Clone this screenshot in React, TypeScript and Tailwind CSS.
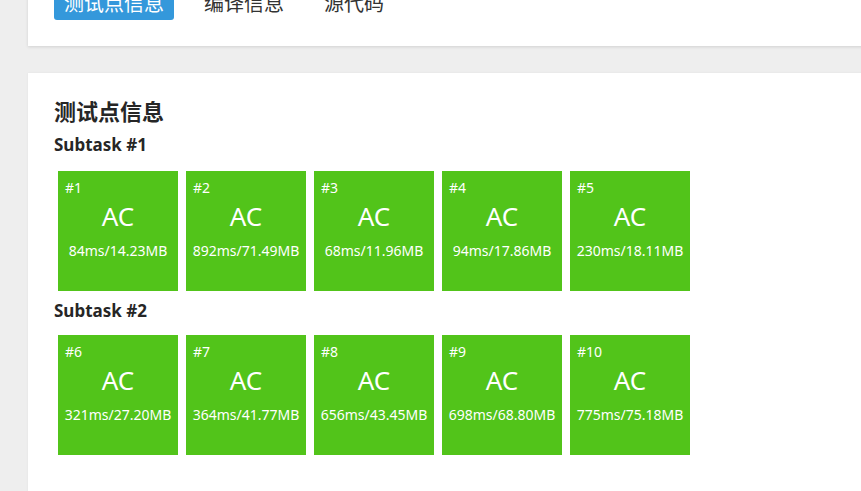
import React from 'react';

interface TestCase {
  id: number;
  status: string;
  time: number;
  memory: string;
}

interface Subtask {
  name: string;
  cases: TestCase[];
}

const subtasks: Subtask[] = [
  {
    name: 'Subtask #1',
    cases: [
      { id: 1, status: 'AC', time: 84, memory: '14.23' },
      { id: 2, status: 'AC', time: 892, memory: '71.49' },
      { id: 3, status: 'AC', time: 68, memory: '11.96' },
      { id: 4, status: 'AC', time: 94, memory: '17.86' },
      { id: 5, status: 'AC', time: 230, memory: '18.11' },
    ],
  },
  {
    name: 'Subtask #2',
    cases: [
      { id: 6, status: 'AC', time: 321, memory: '27.20' },
      { id: 7, status: 'AC', time: 364, memory: '41.77' },
      { id: 8, status: 'AC', time: 656, memory: '43.45' },
      { id: 9, status: 'AC', time: 698, memory: '68.80' },
      { id: 10, status: 'AC', time: 775, memory: '75.18' },
    ],
  },
];

const tabs = ['测试点信息', '编译信息', '源代码'];

function CaseBox({ c }: { c: TestCase }) {
  return (
    <div className="w-[120px] h-[120px] bg-[#52c41a] text-white flex flex-col">
      <div className="text-[14px] leading-[17px] pl-[7px] pt-[8px]">#{c.id}</div>
      <div className="text-[26px] leading-[30px] text-center mt-[5px]">{c.status}</div>
      <div className="text-[14px] leading-[20px] text-center mt-[10px] whitespace-nowrap">
        {c.time}ms/{c.memory}MB
      </div>
    </div>
  );
}

export default function App() {
  const [activeTab, setActiveTab] = React.useState(0);

  return (
    <div
      className="min-h-screen bg-[#eeeeee] overflow-hidden pl-[28px] text-[#262626]"
      style={{ fontFamily: '"Noto Sans", "Noto Sans CJK SC", sans-serif' }}
    >
      {/* tabs card, scrolled so its top is off screen */}
      <div className="bg-white -mt-[46px] pt-[32px] pb-[26px] px-[26px] shadow-[0_1px_3px_rgba(0,0,0,0.12)] w-[900px]">
        <div className="flex gap-[20px]">
          {tabs.map((t, i) => (
            <button
              key={t}
              onClick={() => setActiveTab(i)}
              className={`px-[10px] text-[20px] leading-[34px] rounded-[3px] ${
                activeTab === i ? 'bg-[#3498db] text-white' : 'text-[#333]'
              }`}
              style={{ fontFamily: '"Noto Sans CJK SC", sans-serif' }}
            >
              {t}
            </button>
          ))}
        </div>
      </div>

      <div className="bg-white mt-[27px] pt-[24px] px-[26px] pb-[40px] w-[900px] shadow-[0_0_2px_rgba(0,0,0,0.06)]">
        <h2
          className="text-[22px] leading-[26px] font-bold text-[#262626]"
          style={{ fontFamily: '"Noto Sans CJK SC", sans-serif' }}
        >
          测试点信息
        </h2>
        {subtasks.map((s, idx) => (
          <div key={s.name} className={idx === 0 ? 'mt-[10px]' : 'mt-[8px]'}>
            <h3 className="text-[17px] leading-[24px] font-bold">{s.name}</h3>
            <div className={`flex gap-[8px] pl-[4px] ${idx === 0 ? 'mt-[14px]' : 'mt-[12px]'}`}>
              {s.cases.map((c) => (
                <CaseBox key={c.id} c={c} />
              ))}
            </div>
          </div>
        ))}
      </div>
    </div>
  );
}
